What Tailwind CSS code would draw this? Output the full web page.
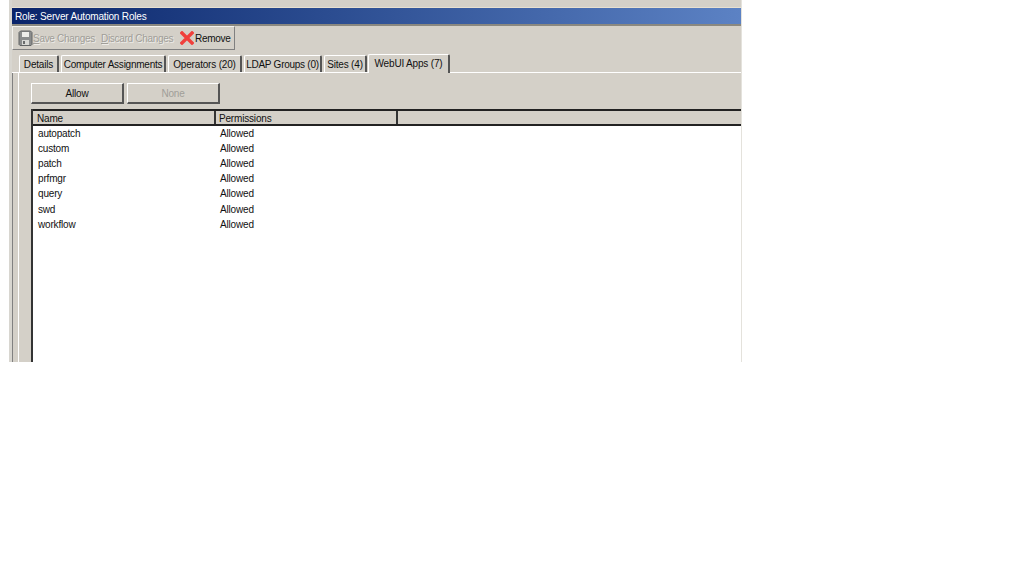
<!DOCTYPE html>
<html>
<head>
<meta charset="utf-8">
<title>Role: Server Automation Roles</title>
<script src="https://cdn.jsdelivr.net/npm/@tailwindcss/browser@4"></script>
</head>
<body class="bg-white">
<div class="w-[1024px] h-[576px] overflow-hidden bg-white font-['Liberation_Sans',Arial,sans-serif] text-[10px] tracking-[-0.18px] leading-none whitespace-nowrap text-[#111]">
  <div class="flex w-[742px] h-[362px] overflow-hidden bg-[#d4d0c8] border-r border-[#e4e2dc]">
    <!-- left edge of the parent frame -->
    <div class="w-[9px] shrink-0 bg-white"></div>
    <div class="w-[3px] shrink-0 bg-[#d8d6d0]"></div>

    <div class="flex-1 min-w-0 flex flex-col pt-[7px]">
      <!-- title -->
      <div class="h-[17px] shrink-0 flex items-center pl-[3px] pt-px text-white bg-gradient-to-r from-[#0a246a] to-[#5c82c4] border-t border-[#e8e0d0]">Role: Server Automation Roles</div>
      <div class="h-[2px] shrink-0 bg-[#8a8880]"></div>

      <!-- toolbar -->
      <div class="h-[24px] w-[223px] shrink-0 flex items-center pl-[5px] border border-[#f4f3ef] border-r-[#808080] border-b-[#808080] tracking-[-0.3px]">
        <svg class="w-[15px] h-[16px] shrink-0" viewBox="0 0 15 16">
          <path d="M1 2.5 2.5 1h10L14 2.5v12l-1 1H2l-1-1z" fill="#8b8d8d" stroke="#626464"/>
          <rect x="4" y="2" width="7" height="5" fill="#eeeeea"/>
          <rect x="4" y="10" width="7" height="5" fill="#d8d8d4"/>
          <rect x="5" y="11" width="2" height="3" fill="#6a6c6c"/>
        </svg>
        <span class="w-[68px] pt-px text-[#a09e98] [text-shadow:1px_1px_0_#eeece8]"><u>S</u>ave Changes</span>
        <span class="w-[79px] pt-px text-[#a09e98] [text-shadow:1px_1px_0_#eeece8]"><u>D</u>iscard Changes</span>
        <svg class="w-[14px] h-[14px] shrink-0" viewBox="0 0 14 14">
          <path d="M2 2 12 12M12 2 2 12" fill="none" stroke="#f0403c" stroke-width="3.4" stroke-linecap="square"/>
        </svg>
        <span class="ml-[1px] pt-px">Remove</span>
      </div>

      <!-- tabs -->
      <div class="h-[23px] shrink-0 flex items-end pl-[7px] gap-[2px] border-b border-white">
        <div class="h-[17px] w-[40px] pt-px flex items-center justify-center border-l border-t border-white border-r-2 border-r-[#555] rounded-t-[2px]">Details</div>
        <div class="h-[17px] w-[105px] pt-px flex items-center justify-center border-l border-t border-white border-r-2 border-r-[#555] rounded-t-[2px] tracking-[-0.24px]">Computer Assignments</div>
        <div class="h-[17px] w-[74px] pt-px flex items-center justify-center border-l border-t border-white border-r-2 border-r-[#555] rounded-t-[2px]">Operators (20)</div>
        <div class="h-[17px] w-[78px] pt-px flex items-center justify-center border-l border-t border-white border-r-2 border-r-[#555] rounded-t-[2px] tracking-[-0.26px]">LDAP Groups (0)</div>
        <div class="h-[17px] w-[43px] pt-px flex items-center justify-center border-l border-t border-white border-r-2 border-r-[#555] rounded-t-[2px]">Sites (4)</div>
        <div class="h-[19px] w-[82px] -mb-px -ml-px flex items-start pt-[4px] justify-center bg-[#d4d0c8] border-l border-t border-white border-r-2 border-r-[#555] rounded-t-[2px]">WebUI Apps (7)</div>
      </div>

      <!-- tab page -->
      <div class="flex-1 min-h-0 flex">
        <div class="w-px shrink-0 bg-[#808080]"></div>
        <div class="flex-1 min-w-0 ml-[5px] flex flex-col pl-[12px] pt-[10px] border-l border-white">
          <div class="flex gap-[3px] shrink-0">
            <button class="w-[93px] h-[21px] pt-px bg-[#d4d0c8] border border-white border-r-2 border-b-2 border-r-[#555] border-b-[#555]">Allow</button>
            <button class="w-[93px] h-[21px] pt-px bg-[#d4d0c8] text-[#a09e98] border border-white border-r-2 border-b-2 border-r-[#555] border-b-[#555]">None</button>
          </div>
          <div class="mt-[5px] flex-1 min-h-0 flex flex-col border-l-2 border-[#333]">
            <div class="h-[17px] shrink-0 flex border-t-2 border-b-2 border-[#222]">
              <div class="w-[183px] pl-[4px] pt-[2px] flex items-center border-r-2 border-[#333]">Name</div>
              <div class="w-[182px] pl-[3px] pt-[2px] flex items-center border-r-2 border-[#333]">Permissions</div>
              <div class="flex-1"></div>
            </div>
            <div class="flex-1 min-h-0 bg-white">
              <div class="h-[15.2px] flex items-center"><span class="w-[187px] pl-[5px]">autopatch</span><span>Allowed</span></div>
              <div class="h-[15.2px] flex items-center"><span class="w-[187px] pl-[5px]">custom</span><span>Allowed</span></div>
              <div class="h-[15.2px] flex items-center"><span class="w-[187px] pl-[5px]">patch</span><span>Allowed</span></div>
              <div class="h-[15.2px] flex items-center"><span class="w-[187px] pl-[5px]">prfmgr</span><span>Allowed</span></div>
              <div class="h-[15.2px] flex items-center"><span class="w-[187px] pl-[5px]">query</span><span>Allowed</span></div>
              <div class="h-[15.2px] flex items-center"><span class="w-[187px] pl-[5px]">swd</span><span>Allowed</span></div>
              <div class="h-[15.2px] flex items-center"><span class="w-[187px] pl-[5px]">workflow</span><span>Allowed</span></div>
            </div>
          </div>
        </div>
      </div>
    </div>
  </div>
</div>
</body>
</html>
